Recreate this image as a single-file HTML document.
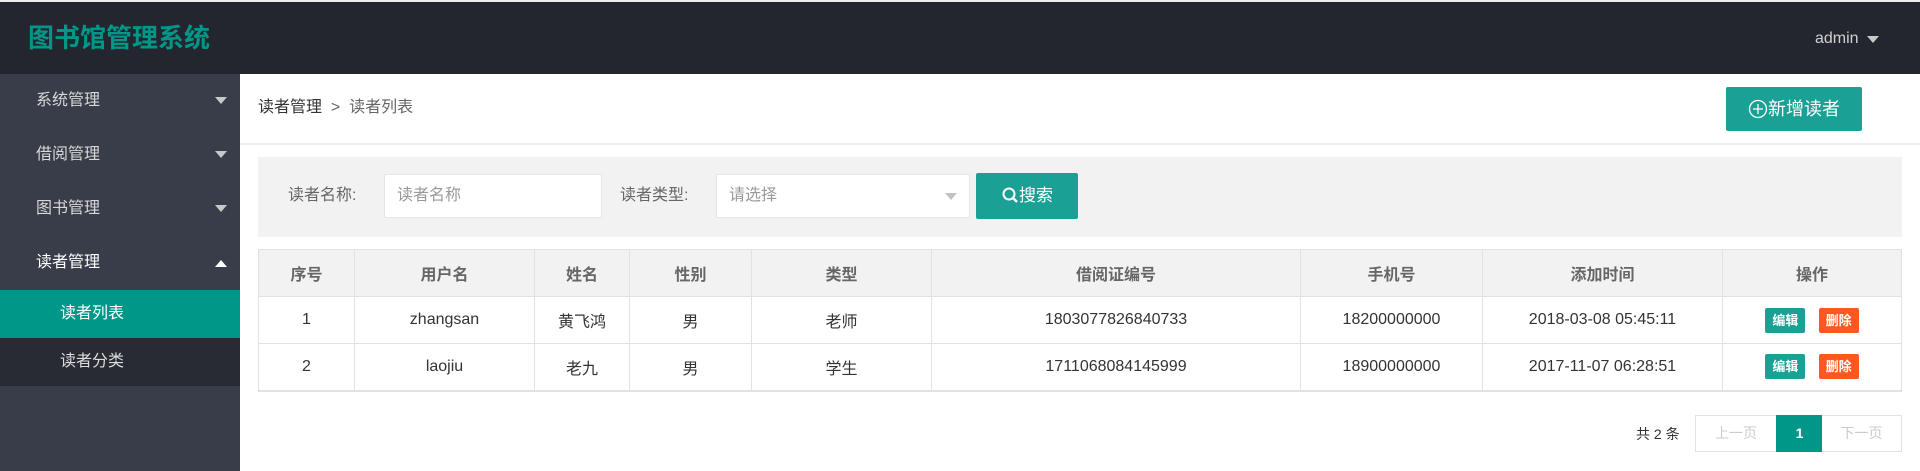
<!DOCTYPE html>
<html><head><meta charset="utf-8"><style>
*{margin:0;padding:0;box-sizing:border-box}
body{width:1920px;height:471px;overflow:hidden;background:#fff;font-family:"Liberation Sans","Noto Sans CJK SC",sans-serif;position:relative}
.a{position:absolute}
.hdr{left:0;top:2px;width:1920px;height:72px;background:#23262e}
.logo{left:28px;top:18px;font-size:26px;font-weight:bold;color:#009688;line-height:40px}
.admin{left:1815px;top:27px;font-size:16px;color:#d0d0d0;line-height:24px}
.tri{width:0;height:0;border-left:6px solid transparent;border-right:6px solid transparent}
.down{border-top:7px solid #c8c8c8}
.up{border-bottom:7px solid #fff}
.side{left:0;top:74px;width:240px;height:397px;background:#393d49}
.it{left:36px;font-size:16px;color:#d8d8d8;line-height:24px}
.sub{left:0;width:240px;height:48px;font-size:16px;line-height:48px;padding-left:60px;color:#ddd}
.bc{left:258px;top:96px;font-size:16px;line-height:24px;color:#666}
.btn{background:#1aa094;color:#fff;border-radius:2px}
.panel{left:258px;top:157px;width:1644px;height:80px;background:#f2f2f2}
.lbl{font-size:16px;color:#666;line-height:24px}
.inp{background:#fff;border:1px solid #e6e6e6;height:44px;font-size:16px;color:#999;line-height:42px;padding-left:12px;border-radius:2px}
table{position:absolute;left:258px;top:249px;width:1644px;border-collapse:collapse;border:1px solid #e2e2e2;border-bottom:2px solid #e2e2e2}
td,th{border:1px solid #e2e2e2;height:47px;text-align:center;font-size:16px;color:#333;font-weight:normal;padding:0}
th{background:#f2f2f2;color:#666;font-weight:bold}
.sb{display:inline-block;width:40px;height:25px;line-height:25px;font-size:13px;font-weight:bold;color:#fff;border-radius:2px}
.pg{top:415px;height:37px;border:1px solid #e2e2e2;font-size:14px;line-height:35px;text-align:center;color:#ccc;background:#fff}
</style></head><body>
<div class="a" style="left:0;top:0;width:1920px;height:2px;background:#eee"></div>
<div class="a hdr"></div>
<div class="a logo">图书馆管理系统</div>
<div class="a admin">admin</div>
<div class="a tri down" style="left:1867px;top:36px"></div>
<div class="a side"></div>
<div class="a it" style="top:89px">系统管理</div><div class="a tri down" style="left:215px;top:97px"></div>
<div class="a it" style="top:143px">借阅管理</div><div class="a tri down" style="left:215px;top:151px"></div>
<div class="a it" style="top:197px">图书管理</div><div class="a tri down" style="left:215px;top:205px"></div>
<div class="a it" style="top:251px;color:#fff">读者管理</div><div class="a tri up" style="left:215px;top:260px"></div>
<div class="a sub" style="top:290px;background:#009688;color:#fff">读者列表</div>
<div class="a sub" style="top:338px;background:#282b33">读者分类</div>
<div class="a bc"><span style="color:#333">读者管理</span>&nbsp;&nbsp;&gt;&nbsp;&nbsp;读者列表</div>
<div class="a" style="left:240px;top:143px;width:1680px;height:2px;background:#ececec"></div>
<div class="a btn" style="left:1726px;top:87px;width:136px;height:44px;font-size:18px;line-height:44px;text-align:center">
<svg width="20" height="20" viewBox="0 0 20 20" style="vertical-align:-4px"><circle cx="10" cy="10" r="8.5" fill="none" stroke="#fff" stroke-width="1.3"/><path d="M10 5v10M5 10h10" stroke="#fff" stroke-width="1.3"/></svg>新增读者</div>
<div class="a panel"></div>
<div class="a lbl" style="left:288px;top:184px">读者名称:</div>
<div class="a inp" style="left:384px;top:174px;width:218px">读者名称</div>
<div class="a lbl" style="left:620px;top:184px">读者类型:</div>
<div class="a inp" style="left:716px;top:174px;width:254px">请选择</div>
<div class="a tri" style="left:945px;top:193px;border-top:7px solid #c2c2c2"></div>
<div class="a btn" style="left:976px;top:173px;width:102px;height:46px;line-height:46px;text-align:center;font-size:17px">
<svg width="18" height="18" viewBox="0 0 18 18" style="vertical-align:-3px"><circle cx="8" cy="8" r="5.5" fill="none" stroke="#fff" stroke-width="2"/><path d="M12 12l4 4" stroke="#fff" stroke-width="2.4"/></svg>搜索</div>
<table>
<tr><th style="width:96px">序号</th><th style="width:180px">用户名</th><th style="width:95px">姓名</th><th style="width:122px">性别</th><th style="width:180px">类型</th><th style="width:369px">借阅证编号</th><th style="width:182px">手机号</th><th style="width:240px">添加时间</th><th>操作</th></tr>
<tr><td>1</td><td>zhangsan</td><td>黄飞鸿</td><td>男</td><td>老师</td><td>1803077826840733</td><td>18200000000</td><td>2018-03-08 05:45:11</td><td><span class="sb" style="background:#1aa094">编辑</span>&nbsp;&nbsp;&nbsp;<span class="sb" style="background:#ff5722">删除</span></td></tr>
<tr><td>2</td><td>laojiu</td><td>老九</td><td>男</td><td>学生</td><td>1711068084145999</td><td>18900000000</td><td>2017-11-07 06:28:51</td><td><span class="sb" style="background:#1aa094">编辑</span>&nbsp;&nbsp;&nbsp;<span class="sb" style="background:#ff5722">删除</span></td></tr>
</table>
<div class="a" style="left:1636px;top:422px;font-size:14px;line-height:24px;color:#333">共 2 条</div>
<div class="a pg" style="left:1695px;width:82px">上一页</div>
<div class="a pg" style="left:1776px;width:47px;background:#009688;border-color:#009688;color:#fff;font-weight:bold">1</div>
<div class="a pg" style="left:1822px;width:80px;border-left:none">下一页</div>
</body></html>
